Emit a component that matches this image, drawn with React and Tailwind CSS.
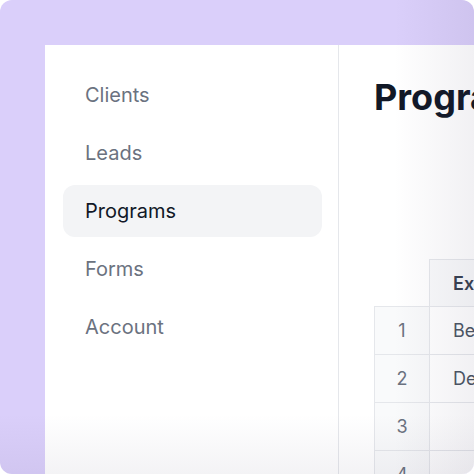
import React from 'react';

const NAV = ['Clients', 'Leads', 'Programs', 'Forms', 'Account'];
const ROWS = [
  { n: '1', text: 'Be' },
  { n: '2', text: 'De' },
  { n: '3', text: '' },
  { n: '4', text: '' },
];

function Sidebar({ active = 'Programs' }) {
  return (
    <nav className="w-[294px] shrink-0 border-r border-[#e5e7eb] pl-[18px] pr-[16px] pt-[24px] flex flex-col gap-[6px]">
      {NAV.map((label) => {
        const isActive = label === active;
        return (
          <div
            key={label}
            className={
              isActive
                ? 'h-[52px] flex items-center pl-[22px] rounded-xl bg-[#f3f4f6] text-[20px] text-[#111827]'
                : 'h-[52px] flex items-center pl-[22px] rounded-xl text-[20px] text-[#6b7280]'
            }
          >
            {label}
          </div>
        );
      })}
    </nav>
  );
}

function ProgramsTable() {
  return (
    <table className="border-collapse mt-[142px]">
      <thead>
        <tr>
          <th className="w-[55px] h-[47px] p-0" />
          <th className="w-[220px] h-[47px] border border-[#e5e7eb] bg-[#f9fafb] text-left pl-[23px] text-[18px] font-semibold text-[#374151]">
            Exercise
          </th>
        </tr>
      </thead>
      <tbody>
        {ROWS.map((row) => (
          <tr key={row.n}>
            <td className="h-[48px] border border-[#e5e7eb] bg-[#f9fafb] text-center text-[18px] text-[#6b7280]">
              {row.n}
            </td>
            <td className="h-[48px] border border-[#e5e7eb] bg-white pl-[23px] text-[18px] text-[#4b5563] whitespace-nowrap">
              {row.text && `${row.text}nch press`}
            </td>
          </tr>
        ))}
      </tbody>
    </table>
  );
}

export default function App() {
  return (
    <div
      className="relative w-[474px] h-[474px] overflow-hidden rounded-xl bg-[#dacffa]"
      style={{ fontFamily: 'Inter, "Noto Sans", sans-serif' }}
    >
      <div className="pl-[45px] pt-[45px] h-full">
        <div className="flex w-[700px] h-[600px] bg-white">
          <Sidebar />
          <main className="pl-[35px] pt-[32px] whitespace-nowrap">
            <h1 className="text-[36px] leading-[40px] font-bold text-[#111827]">Programs</h1>
            <ProgramsTable />
          </main>
        </div>
      </div>
      {/* soft fade over the right and bottom edges */}
      <div className="pointer-events-none absolute inset-y-0 right-0 w-[80px] bg-gradient-to-r from-transparent to-[rgba(60,50,90,0.07)]" />
      <div className="pointer-events-none absolute inset-x-0 bottom-0 h-[60px] bg-gradient-to-b from-transparent to-[rgba(60,50,90,0.06)]" />
    </div>
  );
}
